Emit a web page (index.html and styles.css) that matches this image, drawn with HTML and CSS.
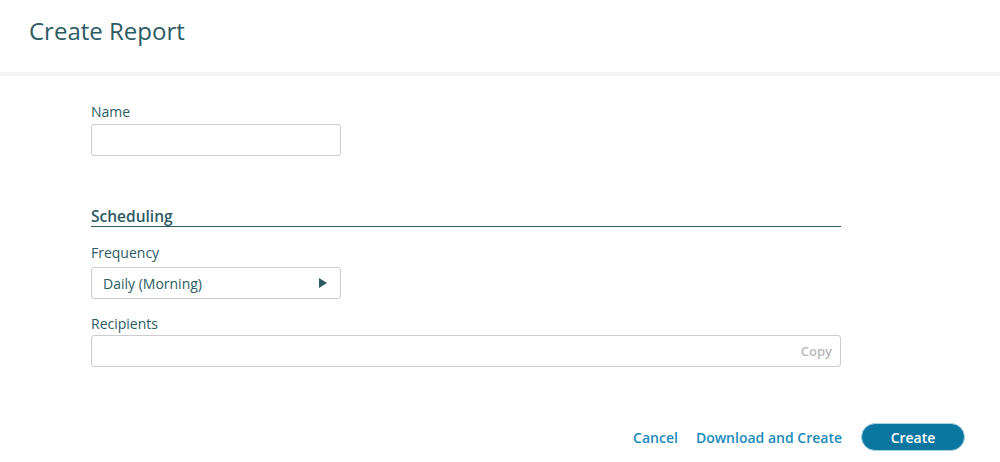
FILE: index.html
```html
<!DOCTYPE html>
<html lang="en">
<head>
    <meta charset="UTF-8">
    <meta name="viewport" content="width=device-width, initial-scale=1.0">
    <title>Create Report</title>
    <link rel="stylesheet" href="styles.css">
</head>
<body>
    <div class="page-header">
        <h1>Create Report</h1>
    </div>

    <div class="report-form">
        <div class="field">
            <label class="field-label" for="report-name">Name</label>
            <input type="text" class="text-input name-input" id="report-name">
        </div>

        <div class="section">
            <h2 class="section-title">Scheduling</h2>

            <div class="field">
                <span class="field-label">Frequency</span>
                <div class="select-box">
                    <span>Daily (Morning)</span>
                    <svg class="select-arrow" width="8" height="10" viewBox="0 0 8 10">
                        <path d="M0 0 L8 5 L0 10 Z" fill="#2b5b63"/>
                    </svg>
                </div>
            </div>

            <div class="field">
                <label class="field-label recipients-label" for="recipients">Recipients</label>
                <div class="recipients-box">
                    <input type="text" class="recipients-input" id="recipients">
                    <span class="copy-link">Copy</span>
                </div>
            </div>
        </div>
    </div>

    <div class="form-actions">
        <a class="action-link" href="#">Cancel</a>
        <a class="action-link" href="#">Download and Create</a>
        <button class="create-button">Create</button>
    </div>
</body>
</html>
```

FILE: styles.css
```css
* {
    margin: 0;
    padding: 0;
    box-sizing: border-box;
}

body {
    font-family: "Open Sans", "Noto Sans", sans-serif;
    background: white;
    color: #2b5b63;
    width: 1000px;
    height: 462px;
    overflow: hidden;
}

.page-header {
    height: 76px;
    padding: 14px 29px 0;
    border-bottom: 4px solid #f4f4f4;
}

.page-header h1 {
    font-size: 24px;
    font-weight: 400;
    color: #2b5b63;
    line-height: 34px;
}

.report-form {
    width: 750px;
    margin-left: 91px;
    padding-top: 26px;
}

.field {
    display: flex;
    flex-direction: column;
}

.field-label {
    font-size: 14px;
    line-height: 20px;
    margin-bottom: 2px;
    color: #2b5b63;
}

.text-input {
    height: 32px;
    border: 1px solid #cccccc;
    border-radius: 3px;
    outline: none;
    font: inherit;
    padding: 0 10px;
}

.name-input {
    width: 250px;
}

.section {
    margin-top: 50px;
}

.section-title {
    font-size: 15.5px;
    font-weight: 600;
    line-height: 20px;
    color: #2b5b63;
    border-bottom: 1px solid #2b5b63;
    margin-bottom: 16px;
}

.select-box {
    width: 250px;
    height: 32px;
    margin-top: 2px;
    border: 1px solid #cccccc;
    border-radius: 3px;
    display: flex;
    align-items: center;
    justify-content: space-between;
    padding: 0 13px 0 11px;
    font-size: 14px;
    color: #2b5b63;
    margin-bottom: 15px;
}

.select-arrow {
    display: block;
}

.recipients-label {
    margin-bottom: 1px;
}

.recipients-box {
    height: 32px;
    border: 1px solid #cccccc;
    border-radius: 3px;
    display: flex;
    align-items: center;
    padding: 0 8px 0 10px;
}

.recipients-input {
    flex: 1;
    border: none;
    outline: none;
    font: inherit;
    height: 100%;
}

.copy-link {
    font-size: 13px;
    font-weight: 600;
    color: #b8b8b8;
}

.form-actions {
    display: flex;
    justify-content: flex-end;
    align-items: center;
    gap: 18px;
    padding: 56px 35px 0 0;
}

.action-link {
    font-size: 14px;
    font-weight: 600;
    color: #1a8bbb;
    text-decoration: none;
}

.create-button {
    width: 104px;
    height: 28px;
    margin-left: 1px;
    border: 1px solid #a8d4e4;
    border-radius: 14px;
    background: #0b77a0;
    color: white;
    font-family: inherit;
    font-size: 14px;
    font-weight: 600;
    cursor: pointer;
}
```
